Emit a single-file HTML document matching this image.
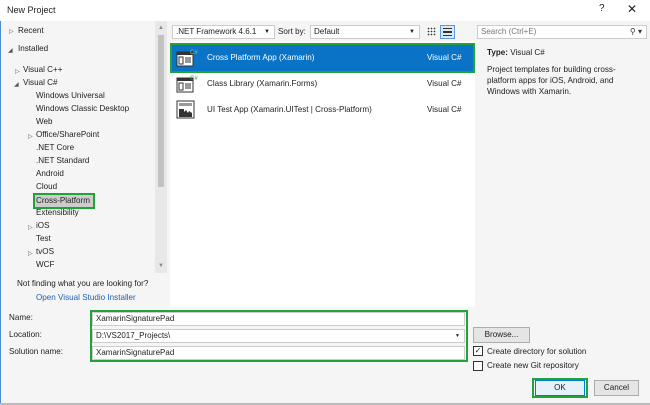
<!DOCTYPE html>
<html><head><style>
*{margin:0;padding:0;box-sizing:border-box}
body{width:650px;height:405px;background:#f5f5f5;font-family:"Liberation Sans",sans-serif;font-size:8.1px;color:#1e1e1e;position:relative;overflow:hidden}
.a{position:absolute;white-space:nowrap}
.inp{position:absolute;background:#fff;border:1px solid #ccc;height:14px;line-height:12px;padding-left:3px;font-size:8px}
.tri{font-size:6px;color:#555}
</style></head><body>
<div class="a" style="left:0;top:0;width:650px;height:21px;background:#fff"></div>
<div class="a" style="left:7px;top:5px;font-size:9px">New Project</div>
<div class="a" style="left:599px;top:3px;font-size:10px">?</div>
<div class="a" style="left:627px;top:2px;font-size:12px">✕</div>
<div class="a" style="left:0;top:21px;width:1px;height:384px;background:#4a8fd8"></div>

<!-- left tree -->
<div class="a tri" style="left:9px;top:28px">▷</div><div class="a" style="left:18px;top:26px">Recent</div>
<div class="a tri" style="left:8px;top:47px">◢</div><div class="a" style="left:18px;top:44px">Installed</div>
<div class="a tri" style="left:15px;top:68px">▷</div><div class="a" style="left:23px;top:65px">Visual C++</div>
<div class="a tri" style="left:14px;top:81px">◢</div><div class="a" style="left:23px;top:78px">Visual C#</div>
<div class="a" style="left:36px;top:91px">Windows Universal</div>
<div class="a" style="left:36px;top:104px">Windows Classic Desktop</div>
<div class="a" style="left:36px;top:117px">Web</div>
<div class="a tri" style="left:28px;top:133px">▷</div><div class="a" style="left:36px;top:130px">Office/SharePoint</div>
<div class="a" style="left:36px;top:143px">.NET Core</div>
<div class="a" style="left:36px;top:156px">.NET Standard</div>
<div class="a" style="left:36px;top:169px">Android</div>
<div class="a" style="left:36px;top:182px">Cloud</div>
<div class="a" style="left:33px;top:193px;width:62px;height:16px;border:2px solid #22a33a;background:#ccc"></div>
<div class="a" style="left:36px;top:196px">Cross-Platform</div>
<div class="a" style="left:36px;top:208px">Extensibility</div>
<div class="a tri" style="left:28px;top:224px">▷</div><div class="a" style="left:36px;top:221px">iOS</div>
<div class="a" style="left:36px;top:234px">Test</div>
<div class="a tri" style="left:28px;top:250px">▷</div><div class="a" style="left:36px;top:247px">tvOS</div>
<div class="a" style="left:36px;top:260px">WCF</div>
<div class="a" style="left:155px;top:21px;width:12px;height:252px;background:#e8e8e8"></div>
<div class="a" style="left:158px;top:35px;width:6px;height:152px;background:#c2c2c2"></div>
<div class="a tri" style="left:158px;top:25px;color:#888">▲</div>
<div class="a tri" style="left:158px;top:263px;color:#888">▼</div>
<div class="a" style="left:17px;top:279px">Not finding what you are looking for?</div>
<div class="a" style="left:36px;top:293px;color:#1a62b5">Open Visual Studio Installer</div>

<!-- middle -->
<div class="a" style="left:170px;top:21px;width:305px;height:286px;background:#fff"></div>
<div class="a" style="left:170px;top:21px;width:305px;height:21px;background:#f5f5f5"></div>
<div class="inp" style="left:172px;top:25px;width:103px">.NET Framework 4.6.1<span style="position:absolute;right:4px;font-size:6px">▼</span></div>
<div class="a" style="left:278px;top:27px">Sort by:</div>
<div class="inp" style="left:310px;top:25px;width:110px">Default<span style="position:absolute;right:4px;font-size:6px">▼</span></div>
<div class="a" style="left:427px;top:27px;width:9px;height:9px;background:radial-gradient(circle,#333 35%,transparent 40%) 0 0/3px 3px"></div>
<div class="a" style="left:440px;top:25px;width:15px;height:14px;border:1px solid #5a9be0;background:#dbe9f8"></div>
<div class="a" style="left:443px;top:28px;width:9px;height:8px;border-top:1.5px solid #333;border-bottom:1.5px solid #333"></div>
<div class="a" style="left:443px;top:31px;width:9px;height:1.5px;background:#333"></div>

<div class="a" style="left:170px;top:43px;width:305px;height:30px;background:#0a73c6;border:2px solid #22a33a"></div>
<div class="a" style="left:207px;top:53px;color:#fff">Cross Platform App (Xamarin)</div>
<div class="a" style="left:427px;top:53px;color:#fff">Visual C#</div>
<div class="a" style="left:207px;top:79px">Class Library (Xamarin.Forms)</div>
<div class="a" style="left:427px;top:79px">Visual C#</div>
<div class="a" style="left:207px;top:105px">UI Test App (Xamarin.UITest | Cross-Platform)</div>
<div class="a" style="left:427px;top:105px">Visual C#</div>
<!-- icons -->
<svg class="a" style="left:176px;top:48px" width="22" height="20"><rect x="1" y="4" width="16" height="14" fill="#fff" stroke="#333"/><rect x="1" y="4" width="16" height="3" fill="#333"/><rect x="3" y="9" width="4" height="7" fill="none" stroke="#333"/><path d="M9 10h6M9 12h6M9 14h6" stroke="#333"/><text x="14" y="6" font-size="6" fill="#7c7" font-family="Liberation Sans">C#</text></svg>
<svg class="a" style="left:176px;top:74px" width="22" height="20"><rect x="1" y="4" width="16" height="14" fill="#fff" stroke="#333"/><rect x="1" y="4" width="16" height="3" fill="#333"/><rect x="3" y="9" width="4" height="7" fill="none" stroke="#333"/><path d="M9 10h6M9 12h6M9 14h6" stroke="#333"/><text x="14" y="6" font-size="6" fill="#393" font-family="Liberation Sans">C#</text></svg>
<svg class="a" style="left:176px;top:100px" width="20" height="20"><rect x="1" y="1" width="17" height="17" fill="#fff" stroke="#333"/><rect x="3" y="3" width="13" height="3" fill="#999"/><path d="M3 17V9h5v3l2-2 2 3 1-2 3 2v4z" fill="#333"/></svg>

<!-- right -->
<div class="inp" style="left:477px;top:25px;width:170px;color:#777">Search (Ctrl+E)<span style="position:absolute;right:4px;color:#333">⚲ ▾</span></div>
<div class="a" style="left:487px;top:48px"><b>Type:</b> Visual C#</div>
<div class="a" style="left:487px;top:64px;line-height:11px">Project templates for building cross-<br>platform apps for iOS, Android, and<br>Windows with Xamarin.</div>

<!-- bottom -->
<div class="a" style="left:9px;top:313px">Name:</div>
<div class="a" style="left:9px;top:330px">Location:</div>
<div class="a" style="left:9px;top:347px">Solution name:</div>
<div class="a" style="left:90px;top:310px;width:378px;height:52px;border:2px solid #22a33a"></div>
<div class="inp" style="left:92px;top:312px;width:373px">XamarinSignaturePad</div>
<div class="inp" style="left:92px;top:329px;width:373px">D:\VS2017_Projects\<span style="position:absolute;right:4px;font-size:5px">▼</span></div>
<div class="inp" style="left:92px;top:346px;width:373px">XamarinSignaturePad</div>
<div class="a" style="left:473px;top:327px;width:57px;height:16px;background:#e5e5e5;border:1px solid #adadad;text-align:center;line-height:14px">Browse...</div>
<div class="a" style="left:473px;top:346px;width:10px;height:10px;border:1px solid #333;background:#fff;font-size:8px;line-height:8px;text-align:center">✓</div>
<div class="a" style="left:487px;top:347px">Create directory for solution</div>
<div class="a" style="left:473px;top:361px;width:10px;height:10px;border:1px solid #333;background:#fff"></div>
<div class="a" style="left:487px;top:361px">Create new Git repository</div>
<div class="a" style="left:532px;top:378px;width:56px;height:20px;border:2px solid #22a33a"></div>
<div class="a" style="left:535px;top:380px;width:50px;height:16px;background:#e5f1fb;border:1px solid #0078d7;text-align:center;line-height:14px">OK</div>
<div class="a" style="left:594px;top:380px;width:45px;height:16px;background:#e5e5e5;border:1px solid #adadad;text-align:center;line-height:14px">Cancel</div>
<div class="a" style="left:0;top:403px;width:650px;height:2px;background:#bbb"></div>
</body></html>
